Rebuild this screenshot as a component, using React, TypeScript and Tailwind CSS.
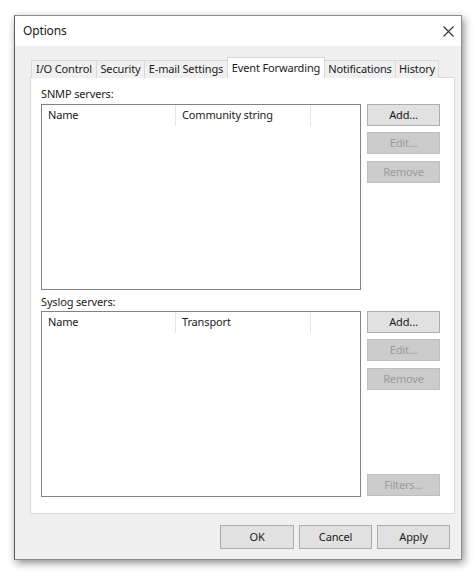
import React from "react"

const FONT = "font-['Segoe_UI','Noto_Sans',sans-serif] text-[11px] tracking-[-0.15px]"

type BtnProps = { label: string; disabled?: boolean; className?: string }

function WinButton({ label, disabled, className }: BtnProps) {
  return (
    <div
      className={
        "flex items-center justify-center border " +
        (disabled
          ? "bg-[#cccccc] border-[#bfbfbf] text-[#9b9b9b] "
          : "bg-[#e1e1e1] border-[#adadad] text-[#1a1a1a] ") +
        (className || "")
      }
    >
      {label}
    </div>
  )
}

function ServerList({ second }: { second: string }) {
  return (
    <div className="w-[320px] h-[186px] border border-[#828282] bg-white">
      <div className="flex h-[21px] items-center text-[#1a1a1a]">
        <div className="w-[134px] h-full flex items-center pl-[6px] border-r border-[#e5e5e5]">Name</div>
        <div className="w-[135px] h-full flex items-center pl-[6px] border-r border-[#e5e5e5]">{second}</div>
      </div>
    </div>
  )
}

const TABS: [string, string][] = [
  ["I/O Control", "w-[66px]"],
  ["Security", "w-[49px]"],
  ["E-mail Settings", "w-[84px]"],
  ["Event Forwarding", "w-[98px]"],
  ["Notifications", "w-[72px]"],
  ["History", "w-[44px]"],
]

export default function App() {
  return (
    <div className={"w-[474px] h-[576px] bg-white pl-[14px] pt-[15px] " + FONT}>
      <div className="w-[448px] h-[545px] flex flex-col border border-[#8c8c8c] border-l-[#5a5a5a] shadow-[2px_3px_8px_rgba(0,0,0,0.45)]">
        {/* title bar */}
        <div className="h-[30px] bg-white flex items-center justify-between pl-[8px] pr-[7px] shrink-0">
          <span className="text-[12px] text-[#1a1a1a]">Options</span>
          <svg width="11" height="11" viewBox="0 0 11 11" className="text-[#333]">
            <path d="M0.5 0.5 L10.5 10.5 M10.5 0.5 L0.5 10.5" stroke="currentColor" strokeWidth="1.1" fill="none" />
          </svg>
        </div>

        {/* body */}
        <div className="flex-1 bg-[#f0f0f0] flex flex-col pl-[15px] pr-[6px] pt-[11px]">
          <div className="flex items-end h-[21px] pl-[1px] relative z-10">
            {TABS.map(([t, w]) =>
              t === "Event Forwarding" ? (
                <div
                  key={t}
                  className={"h-[21px] shrink-0 whitespace-nowrap bg-white border border-b-0 border-[#d9d9d9] -mr-[1px] flex items-center justify-center text-[#1a1a1a] " + w}
                >
                  {t}
                </div>
              ) : (
                <div
                  key={t}
                  className={"h-[18px] shrink-0 whitespace-nowrap bg-[#f0f0f0] border border-b-0 border-[#d9d9d9] -mr-[1px] flex items-center justify-center text-[#1a1a1a] " + w}
                >
                  {t}
                </div>
              )
            )}
          </div>

          <div className="h-[437px] -mt-[1px] bg-white border border-[#d9d9d9] flex flex-col pl-[10px] pt-[9px]">
            <div className="text-[#1a1a1a] leading-[14px]">SNMP servers:</div>
            <div className="flex gap-[6px] mt-[3px]">
              <ServerList second="Community string" />
              <div className="flex flex-col gap-[6px]">
                <WinButton label="Add..." className="w-[73px] h-[22px]" />
                <WinButton label="Edit..." disabled className="w-[73px] h-[22px]" />
                <WinButton label="Remove" disabled className="w-[73px] h-[22px] mt-[1px]" />
              </div>
            </div>

            <div className="text-[#1a1a1a] leading-[14px] mt-[5px]">Syslog servers:</div>
            <div className="flex gap-[6px] mt-[2px]">
              <ServerList second="Transport" />
              <div className="flex flex-col gap-[6px]">
                <WinButton label="Add..." className="w-[73px] h-[22px]" />
                <WinButton label="Edit..." disabled className="w-[73px] h-[22px]" />
                <WinButton label="Remove" disabled className="w-[73px] h-[22px] mt-[1px]" />
                <div className="flex-1" />
                <WinButton label="Filters..." disabled className="w-[73px] h-[22px] mb-[1px]" />
              </div>
            </div>
          </div>

          <div className="flex justify-end gap-[5px] mt-[11px] pr-[5px]">
            <WinButton label="OK" className="w-[74px] h-[24px]" />
            <WinButton label="Cancel" className="w-[73px] h-[24px]" />
            <WinButton label="Apply" className="w-[73px] h-[24px]" />
          </div>
        </div>
      </div>
    </div>
  )
}
